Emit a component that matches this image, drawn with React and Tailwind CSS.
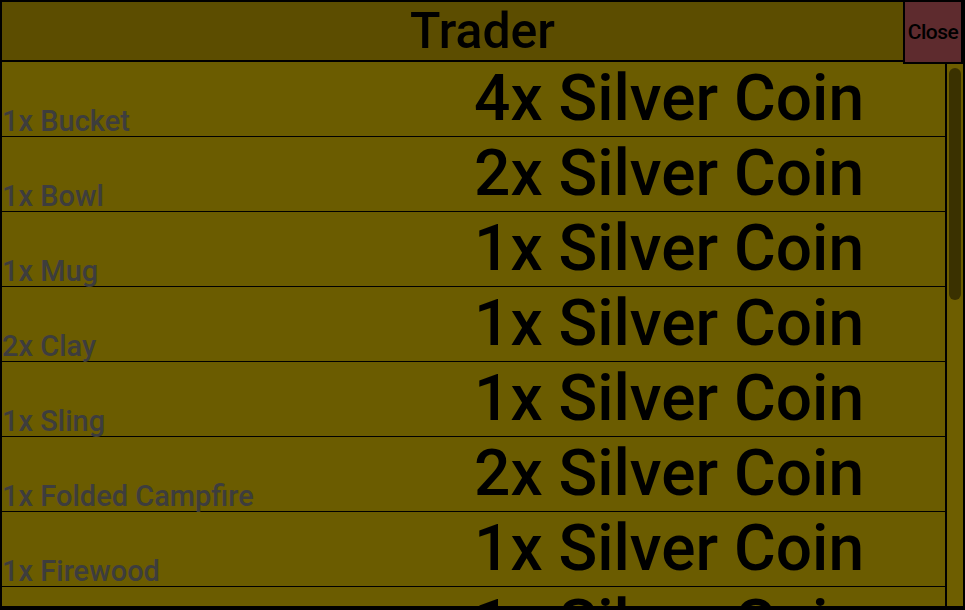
import React from "react";

const trades = [
  { item: "1x Bucket", price: "4x Silver Coin" },
  { item: "1x Bowl", price: "2x Silver Coin" },
  { item: "1x Mug", price: "1x Silver Coin" },
  { item: "2x Clay", price: "1x Silver Coin" },
  { item: "1x Sling", price: "1x Silver Coin" },
  { item: "1x Folded Campfire", price: "2x Silver Coin" },
  { item: "1x Firewood", price: "1x Silver Coin" },
  { item: "1x Rope", price: "1x Silver Coin" },
  { item: "1x Torch", price: "1x Silver Coin" },
  { item: "1x Stone Axe", price: "3x Silver Coin" },
];

export default function App() {
  return (
    <div
      className="w-[965px] h-[610px] border-2 border-b-4 border-black bg-[#6b5c00] flex flex-col overflow-hidden relative"
      style={{ fontFamily: "Roboto, 'Noto Sans', sans-serif" }}
    >
      {/* Header */}
      <div className="h-[60px] shrink-0 border-b-2 border-black bg-[#5c4d00] flex items-center justify-center">
        <h1 className="text-[50px] leading-none font-medium text-black">Trader</h1>
      </div>

      {/* Close button */}
      <button className="absolute -top-[2px] right-0 w-[60px] h-[64px] border-2 border-black bg-[#5e2b2e] flex items-center justify-center text-[21px] leading-none font-medium text-black tracking-tight">
        Close
      </button>

      {/* Body */}
      <div className="flex-1 flex min-h-0">
        <div className="flex-1 overflow-hidden">
          {trades.map((t, i) => (
            <div key={i} className="h-[75px] border-b border-black flex">
              <div className="w-[472px] flex items-end">
                <span className="text-[29px] leading-none font-medium text-[#3d3d3d]">{t.item}</span>
              </div>
              <div className="flex-1 flex items-center">
                <span className="text-[64px] leading-none font-medium text-black">{t.price}</span>
              </div>
            </div>
          ))}
        </div>

        {/* Scrollbar */}
        <div className="w-[18px] shrink-0 border-l-2 border-black bg-[#6e5e00] pt-[6px] px-[2px]">
          <div className="h-[232px] rounded-full bg-[#3a3100]" />
        </div>
      </div>
    </div>
  );
}
